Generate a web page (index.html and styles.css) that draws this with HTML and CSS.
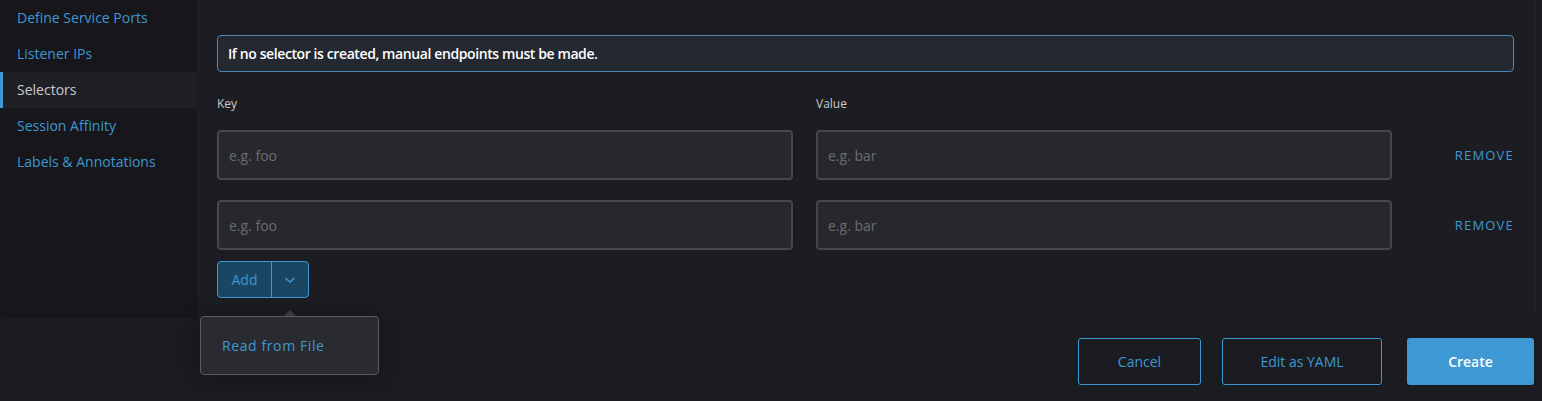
FILE: index.html
```html
<!DOCTYPE html>
<html>
<head>
<meta charset="utf-8">
<link rel="stylesheet" href="styles.css">
</head>
<body>
<div class="card">
  <nav class="sidebar">
    <a class="nav-item">Define Service Ports</a>
    <a class="nav-item">Listener IPs</a>
    <a class="nav-item active">Selectors</a>
    <a class="nav-item">Session Affinity</a>
    <a class="nav-item">Labels &amp; Annotations</a>
  </nav>
  <main class="main">
    <div class="banner">If no selector is created, manual endpoints must be made.</div>
    <div class="kv">
      <div class="label">Key</div>
      <div class="label">Value</div>
      <div></div>
      <div class="input placeholder">e.g. foo</div>
      <div class="input placeholder">e.g. bar</div>
      <div class="remove">REMOVE</div>
      <div class="input placeholder">e.g. foo</div>
      <div class="input placeholder">e.g. bar</div>
      <div class="remove">REMOVE</div>
    </div>
    <div class="add-wrap">
      <div class="split-btn">
        <span class="split-main">Add</span>
        <span class="split-toggle">
          <svg width="12" height="8" viewBox="0 0 12 8"><path d="M1.5 2l4.5 4 4.5-4" fill="none" stroke="#3d98d3" stroke-width="1.5"/></svg>
        </span>
      </div>
      <div class="popover">
        <span class="pop-arrow"></span>
        <a class="pop-item">Read from File</a>
      </div>
    </div>
  </main>
</div>
<div class="footer">
  <button class="btn outline cancel">Cancel</button>
  <button class="btn outline yaml">Edit as YAML</button>
  <button class="btn primary create">Create</button>
</div>
</body>
</html>
```
FILE: styles.css
```css
html, body {
  margin: 0;
  padding: 0;
}
body {
  background: #1b1c21;
  font-family: "Open Sans", "Noto Sans", sans-serif;
  color: #e6e6e6;
  width: 1542px;
  height: 401px;
  overflow: hidden;
}
.card {
  display: flex;
  width: 1535px;
  height: 318px;
  border-radius: 0 0 6px 6px;
  background: #1c1d22;
  box-shadow: 1px 0 0 #222328;
}
.sidebar {
  width: 197px;
  flex: none;
  background: #16161b;
  border-radius: 0 0 0 6px;
  display: flex;
  flex-direction: column;
}
.nav-item {
  display: block;
  height: 36px;
  line-height: 36px;
  padding-left: 17px;
  font-size: 14px;
  color: #3d98d3;
  box-sizing: border-box;
}
.nav-item.active {
  background: #1f2026;
  color: #c9cacd;
  border-left: 3px solid #3d98d3;
  padding-left: 14px;
}
.main {
  flex: 1;
  padding: 35px 21px 0 20px;
  position: relative;
}
.banner {
  height: 37px;
  box-sizing: border-box;
  border: 1px solid #4d86b5;
  border-radius: 4px;
  background: #232831;
  color: #ffffff;
  font-size: 14px;
  font-weight: 600;
  letter-spacing: -0.4px;
  line-height: 35px;
  padding-left: 10px;
}
.kv {
  display: grid;
  grid-template-columns: 576px 576px 1fr;
  column-gap: 23px;
  row-gap: 20px;
  margin-top: 24px;
  align-items: center;
}
.label {
  font-size: 12px;
  color: #c9cacd;
  line-height: 16px;
  margin-bottom: -2px;
}
.input {
  height: 50px;
  box-sizing: border-box;
  border: 2px solid #46474c;
  border-radius: 4px;
  background: #27282d;
  font-size: 14px;
  line-height: 48px;
  padding-left: 10px;
}
.placeholder {
  color: #6b6c71;
}
.remove {
  text-align: right;
  color: #3d98d3;
  font-size: 13px;
  letter-spacing: 1.2px;
  font-weight: 500;
}
.add-wrap {
  position: relative;
  margin-top: 11px;
}
.split-btn {
  display: inline-flex;
  height: 37px;
  box-sizing: border-box;
  border: 1px solid #3d98d3;
  border-radius: 4px;
  background: #1a4563;
  color: #3d98d3;
  font-size: 14px;
}
.split-main {
  width: 53px;
  text-align: center;
  line-height: 35px;
  border-right: 1px solid #3d98d3;
}
.split-toggle {
  width: 36px;
  display: flex;
  align-items: center;
  justify-content: center;
}
.popover {
  position: absolute;
  left: -17px;
  top: 55px;
  width: 179px;
  height: 59px;
  box-sizing: border-box;
  background: #2a2b30;
  border: 1px solid #5a5b60;
  border-radius: 4px;
  box-shadow: 0 0 20px rgba(0,0,0,0.35);
  padding-left: 21px;
  line-height: 57px;
}
.pop-arrow {
  position: absolute;
  left: 83px;
  top: -7px;
  width: 0;
  height: 0;
  border-left: 6px solid transparent;
  border-right: 6px solid transparent;
  border-bottom: 6px solid #3a3b40;
}
.pop-item {
  color: #3d98d3;
  font-size: 14px;
  letter-spacing: 0.6px;
}
.footer {
  display: flex;
  justify-content: flex-end;
  width: 1534px;
  margin-top: 20px;
}
.btn {
  height: 47px;
  box-sizing: border-box;
  border-radius: 3px;
  font-family: inherit;
  font-size: 14px;
  padding: 0;
}
.outline {
  background: transparent;
  border: 1px solid #3d98d3;
  color: #3d98d3;
}
.cancel { width: 123px; }
.yaml { width: 160px; margin-left: 21px; }
.primary {
  background: #3d98d3;
  border: none;
  color: #ffffff;
  font-weight: 600;
}
.create { width: 127px; margin-left: 25px; }
```
